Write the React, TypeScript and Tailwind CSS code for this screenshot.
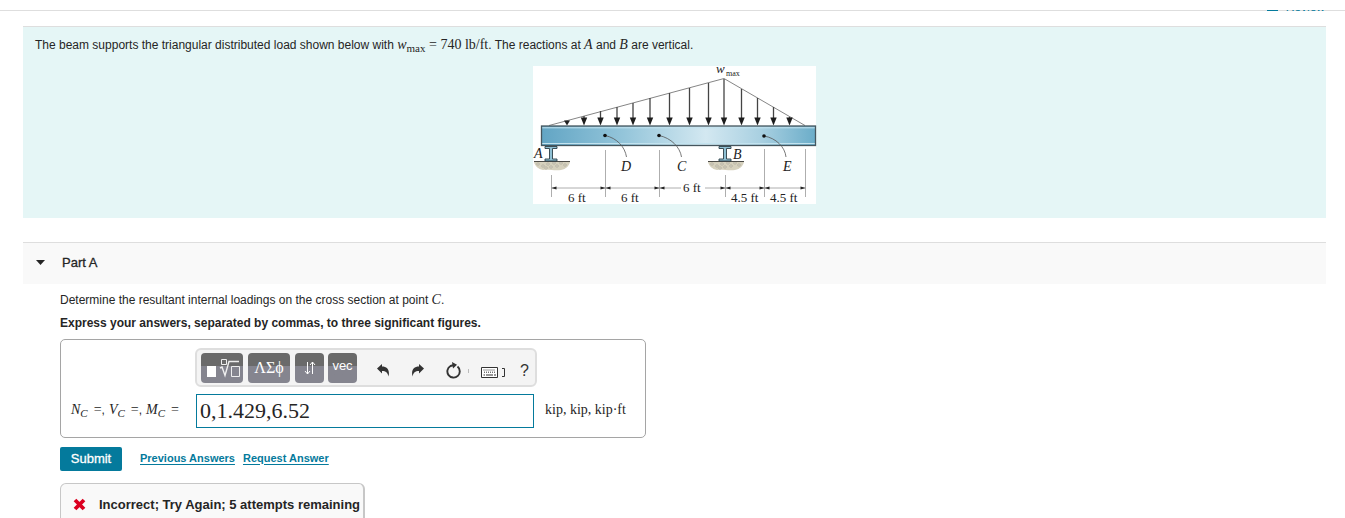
import type { ReactNode } from "react";

const ARROWS = [
  { x: 584, top: 116 },
  { x: 600.5, top: 111 },
  { x: 617, top: 107 },
  { x: 633, top: 103 },
  { x: 650, top: 98 },
  { x: 669.5, top: 93 },
  { x: 689.5, top: 88 },
  { x: 708.5, top: 83 },
  { x: 724, top: 79 },
  { x: 741.5, top: 89 },
  { x: 757.5, top: 98 },
  { x: 773.5, top: 107 },
  { x: 789.5, top: 117 },
];

const EXTENSIONS = [
  { x: 551.5, y: 175 },
  { x: 605.5, y: 150 },
  { x: 659.5, y: 150 },
  { x: 725.5, y: 175 },
  { x: 764.5, y: 149 },
  { x: 805.5, y: 149 },
];

const PEBBLES = [
  [4, 3], [9, 5], [14, 3], [17, 6], [23, 5], [27, 2], [31, 4], [12, 7], [20, 2],
];

const Support = ({ x }: { x: number }) => (
  <g transform={`translate(${x} 0)`}>
    <path
      d="M-17 162H19C18 166 15 169 10 170C4 171-3 169-8 170C-13 169-16 166-17 162Z"
      fill="#d6d1be"
    />
    {PEBBLES.map(([cx, cy]) => (
      <ellipse
        key={cx}
        cx={cx - 17}
        cy={cy + 161}
        rx="1.4"
        ry="1"
        fill="#efecdf"
        stroke="#8b8676"
        strokeWidth="0.5"
      />
    ))}
    <path d="M-17 161.5H19" stroke="#4b4a46" />
    <path
      d="M-6 146.5H6V148.5H1.5V159H6V161H-6V159H-1.5V148.5H-6Z"
      fill="#8fc0d4"
      stroke="#2e3f47"
      strokeWidth="0.9"
    />
  </g>
);

const Dimension = ({ from, to }: { from: number; to: number }) => (
  <g fill="#222">
    <path d={`M${from} 188l5 -1.6v3.2z`} />
    <path d={`M${to} 188l-5 -1.6v3.2z`} />
  </g>
);

const BeamDiagram = () => (
  <svg
    width="283"
    height="138"
    viewBox="533 66 283 138"
    role="img"
    aria-label="Beam with a triangular distributed load"
    className="mx-auto block overflow-visible bg-white font-['Liberation_Serif',serif]"
  >
    <defs>
      <linearGradient id="beam">
        <stop offset="0" stopColor="#62a5c4" />
        <stop offset="0.3" stopColor="#94c5da" />
        <stop offset="0.6" stopColor="#d3e8f1" />
        <stop offset="0.8" stopColor="#a9d0e1" />
        <stop offset="1" stopColor="#6badc9" />
      </linearGradient>
    </defs>

    <path d="M549 125.5L724 78.5L805 125.5" fill="none" stroke="#666" strokeWidth="0.8" />
    <path d="M564 120.5h6l-3 5z" fill="#222" />
    {ARROWS.map(({ x, top }) => (
      <g key={x}>
        <path d={`M${x} ${top}V120`} stroke="#444" strokeWidth="1.3" />
        <path d={`M${x - 3.2} 117.5h6.4l-3.2 8z`} fill="#1d1d1d" />
      </g>
    ))}

    <rect x="541.5" y="126" width="274" height="19.5" fill="url(#beam)" />
    <path d="M542 127.8H815M542 143.5H815" stroke="#c3e3ef" strokeWidth="1" />
    <rect x="541.5" y="126" width="274" height="19.5" fill="none" stroke="#46565e" strokeWidth="1.3" />

    <Support x={551} />
    <Support x={725} />

    <g fill="none" stroke="#555" strokeWidth="0.8">
      <path d="M605 135.5C617 138 625 147 626.5 157" />
      <path d="M659 135.5C671 138 680 147 681.5 157" />
      <path d="M764 136C776 138 785 147 786 157" />
    </g>
    <g fill="#111">
      <circle cx="605" cy="135.5" r="1.8" />
      <circle cx="659" cy="135.5" r="1.8" />
      <circle cx="764" cy="136" r="1.8" />
    </g>

    <g stroke="#999" strokeWidth="0.8">
      {EXTENSIONS.map(({ x, y }) => (
        <path key={x} d={`M${x} ${y}V197`} />
      ))}
      <path d="M551.5 188H681M705 188H805.5" />
    </g>
    <Dimension from={551.5} to={605.5} />
    <Dimension from={605.5} to={659.5} />
    <Dimension from={659.5} to={725.5} />
    <Dimension from={725.5} to={764.5} />
    <Dimension from={764.5} to={805.5} />

    <g fill="#222" fontSize="14" fontStyle="italic">
      <text x="534" y="158">A</text>
      <text x="621" y="171">D</text>
      <text x="677" y="171">C</text>
      <text x="733" y="159">B</text>
      <text x="783" y="171">E</text>
      <text x="716" y="73" fontSize="13">w</text>
    </g>
    <g fill="#222" fontSize="13">
      <text x="726" y="76" fontSize="8">max</text>
      <text x="568" y="202">6 ft</text>
      <text x="621" y="202">6 ft</text>
      <text x="683" y="192">6 ft</text>
      <text x="731" y="202">4.5 ft</text>
      <text x="770" y="202">4.5 ft</text>
    </g>
  </svg>
);

const MathText = ({ children }: { children: ReactNode }) => (
  <span className="font-['Liberation_Serif',serif] text-sm leading-none">{children}</span>
);

const Comma = () => <span className="mr-1 font-['Liberation_Sans',sans-serif] text-xs">,</span>;

const Variable = ({ name }: { name: string }) => (
  <>
    <i>{name}</i>
    <sub className="text-[11px] italic">C</sub>
    <span className="ml-1.5">=</span>
  </>
);

const PaletteButton = ({
  label,
  className,
  children,
}: {
  label: string;
  className: string;
  children: ReactNode;
}) => (
  <button
    type="button"
    aria-label={label}
    className={`flex h-[30px] items-center justify-center rounded bg-linear-to-b from-[#6a6a6a] from-45% to-[#85858f] to-45% text-white ${className}`}
  >
    {children}
  </button>
);

const Toolbar = () => (
  <div className="flex h-[39px] w-[342px] items-center rounded-md border-2 border-[#dedede] bg-[#f4f4f4] pl-1 text-[#333]">
    <PaletteButton label="Templates" className="w-[42px]">
      <svg width="42" height="30" viewBox="0 0 42 30" fill="none">
        <path d="M6 13h9v11H6z" fill="#fff" />
        <path d="M20.5 6.5h5v5h-5zM30.5 13.5h8v10h-8z" stroke="#eee" />
        <path d="M19 15l2 -1l3 8.5L28 8.5H38" stroke="#eee" strokeWidth="1.4" />
      </svg>
    </PaletteButton>
    <PaletteButton
      label="Symbols"
      className="ml-[5px] w-[42px] font-['Liberation_Serif',serif] text-base leading-none"
    >
      ΛΣϕ
    </PaletteButton>
    <PaletteButton label="Subscript and superscript" className="ml-[5px] w-[29px]">
      <svg width="14" height="16" viewBox="0 0 14 16" fill="none" stroke="#fff">
        <path d="M4.5 2v12M2 11l2.5 3l2.5 -3M9.5 14V2M7 5l2.5 -3l2.5 3" />
      </svg>
    </PaletteButton>
    <PaletteButton label="Vector" className="ml-1 w-[29px] pb-1 text-[13px] leading-none">
      vec
    </PaletteButton>
    <div className="flex items-center pt-1.5">
      <button type="button" aria-label="Undo" className="ml-5">
        <svg width="12" height="13" viewBox="0 0 12 13" fill="currentColor">
          <path d="M0 4.5L5 0v2.5c5.5 0 8 4 6.5 10C10.5 8.5 9 7 5 7V9.5z" />
        </svg>
      </button>
      <button type="button" aria-label="Redo" className="ml-[23px]">
        <svg width="12" height="13" viewBox="0 0 12 13" fill="currentColor">
          <path d="M12 4.5L7 0v2.5C1.5 2.5-1 6.5 .5 12.5C1.5 8.5 3 7 7 7V9.5z" />
        </svg>
      </button>
      <button type="button" aria-label="Reset" className="ml-[22px]">
        <svg width="15" height="17" viewBox="0 0 15 17" fill="none">
          <path d="M11.5 4.6A6.2 6.2 0 1 1 4.5 4L8 3" stroke="currentColor" strokeWidth="1.9" />
          <path d="M6 0l5 2.8L7 6.5z" fill="currentColor" />
        </svg>
      </button>
      <span className="ml-[7px] h-1 w-px bg-[#bbb]" />
      <button type="button" aria-label="Keyboard shortcuts" className="ml-3 pt-1">
        <svg width="25" height="11" viewBox="0 0 25 11" fill="none" stroke="currentColor">
          <path d="M.5 .5h16v10H.5z" fill="#fff" />
          <path d="M2.5 3h12M3 5.2h12" strokeDasharray="1 1" />
          <path d="M2.5 8h1.500M5 8h7M13 8h2M21 1.5h2.5v8H21" />
        </svg>
      </button>
      <button type="button" aria-label="Help" className="ml-[14px] text-base leading-none">
        ?
      </button>
    </div>
  </div>
);

const App = () => {
  return (
    <div className="h-screen overflow-hidden bg-white font-['Liberation_Sans',Arial,sans-serif] text-xs text-[#252525]">
      <header className="mt-2.5 flex h-px justify-end overflow-hidden bg-[#dedede] pr-5">
        <a href="#review" className="flex h-px items-end gap-2 leading-[8px] text-[#047a9c]">
          <span className="h-px w-[11px] bg-[#047a9c]" />
          Review
        </a>
      </header>

      <main className="mt-[15px] mr-[19px] ml-[23px]">
        <section className="border-t border-[#dedede] bg-[#e5f6f6] pb-[14px]">
          <p className="flex h-[39px] items-center pb-[3px] pl-3">
            <span>
              The beam supports the triangular distributed load shown below with{" "}
              <MathText>
                <i>w</i>
                <sub className="text-[11px]">max</sub> = 740 lb/ft
              </MathText>
              . The reactions at <MathText><i>A</i></MathText> and{" "}
              <MathText><i>B</i></MathText> are vertical.
            </span>
          </p>
          <BeamDiagram />
        </section>

        <section className="mt-6">
          <h2 className="border-t border-[#dedede] bg-[#f9f9f9]">
            <button type="button" className="flex h-[41px] w-full items-center pb-0.5 pl-[13px] text-[13px]">
              <svg width="9" height="5" viewBox="0 0 9 5" fill="currentColor">
                <path d="M0 0h9L4.5 5z" />
              </svg>
              <span className="ml-[17px] [-webkit-text-stroke:0.3px]">Part A</span>
            </button>
          </h2>

          <div className="pl-[37px]">
            <p className="mt-2 leading-4">
              Determine the resultant internal loadings on the cross section at point{" "}
              <MathText><i>C</i></MathText>.
            </p>
            <p className="mt-[7px] leading-4 font-bold">
              Express your answers, separated by commas, to three significant figures.
            </p>

            <div className="mt-2 w-[586px] rounded-[5px] border border-[#a5a5a5] pt-2 pb-[9px]">
              <div className="pl-[134px]">
                <Toolbar />
              </div>
              <div className="mt-[7px] flex items-center">
                <label htmlFor="answer" className="w-[135px] pb-0.5 pl-2.5 whitespace-nowrap">
                  <MathText>
                    <Variable name="N" />
                    <Comma />
                    <Variable name="V" />
                    <Comma />
                    <Variable name="M" />
                  </MathText>
                </label>
                <input
                  id="answer"
                  type="text"
                  defaultValue="0,1.429,6.52"
                  className="h-[34px] w-[338px] border border-[#047a9c] bg-white px-[3px] font-['Liberation_Serif',serif] text-[22px] outline-none"
                />
                <span className="ml-[11px] pb-0.5">
                  <MathText>kip, kip, kip·ft</MathText>
                </span>
              </div>
            </div>

            <div className="mt-[9px] flex items-center text-[11px] font-bold text-[#047a9c]">
              <button
                type="submit"
                className="h-6 w-[62px] rounded-xs bg-[#047a9c] text-[13px] font-normal text-white [-webkit-text-stroke:0.3px]"
              >
                Submit
              </button>
              <a href="#previous" className="ml-[18px] pb-0.5 underline underline-offset-2">
                Previous Answers
              </a>
              <a href="#request" className="ml-2 pb-0.5 underline underline-offset-2">
                Request Answer
              </a>
            </div>

            <div
              role="status"
              className="mt-3 flex h-[60px] w-[305px] items-start rounded-md border border-r-2 border-[#c7c7c7] bg-[#f9f9f9] pt-3 pl-3 text-[13px] leading-[18px] font-bold"
            >
              <svg width="13" height="13" viewBox="0 0 13 13" className="mt-0.5">
                <path d="M2 2l9 9M11 2l-9 9" stroke="#db0020" strokeWidth="3.8" />
              </svg>
              <span className="ml-[13px] whitespace-nowrap">Incorrect; Try Again; 5 attempts remaining</span>
            </div>
          </div>
        </section>
      </main>
    </div>
  );
};

export default App;
